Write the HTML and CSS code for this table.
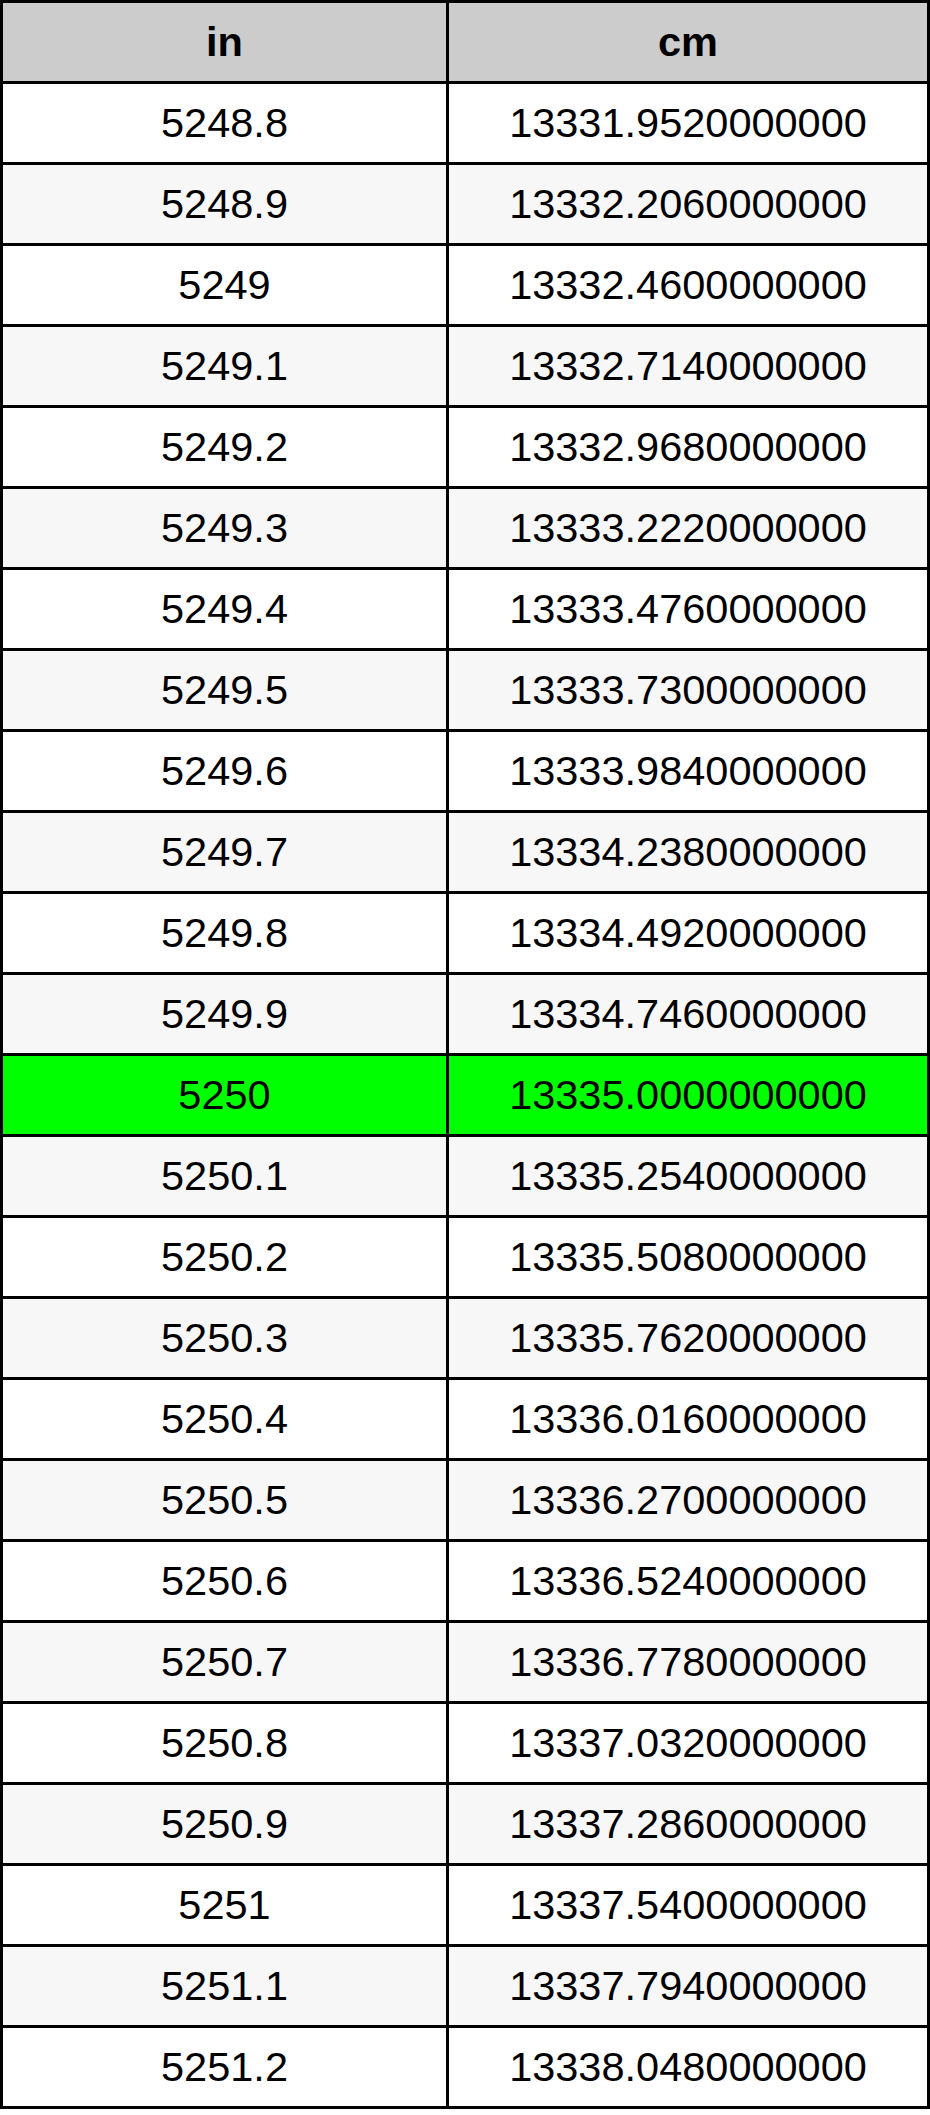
FILE: index.html
```html
<!DOCTYPE html>
<html lang="en">
<head>
<meta charset="utf-8">
<title>in to cm</title>
<link rel="stylesheet" href="styles.css">
</head>
<body>
<div class="conv" role="table">
  <div class="row head" role="row"><div class="cell" role="columnheader">in</div><div class="cell" role="columnheader">cm</div></div>
  <div class="row" role="row"><div class="cell">5248.8</div><div class="cell">13331.9520000000</div></div>
  <div class="row alt" role="row"><div class="cell">5248.9</div><div class="cell">13332.2060000000</div></div>
  <div class="row" role="row"><div class="cell">5249</div><div class="cell">13332.4600000000</div></div>
  <div class="row alt" role="row"><div class="cell">5249.1</div><div class="cell">13332.7140000000</div></div>
  <div class="row" role="row"><div class="cell">5249.2</div><div class="cell">13332.9680000000</div></div>
  <div class="row alt" role="row"><div class="cell">5249.3</div><div class="cell">13333.2220000000</div></div>
  <div class="row" role="row"><div class="cell">5249.4</div><div class="cell">13333.4760000000</div></div>
  <div class="row alt" role="row"><div class="cell">5249.5</div><div class="cell">13333.7300000000</div></div>
  <div class="row" role="row"><div class="cell">5249.6</div><div class="cell">13333.9840000000</div></div>
  <div class="row alt" role="row"><div class="cell">5249.7</div><div class="cell">13334.2380000000</div></div>
  <div class="row" role="row"><div class="cell">5249.8</div><div class="cell">13334.4920000000</div></div>
  <div class="row alt" role="row"><div class="cell">5249.9</div><div class="cell">13334.7460000000</div></div>
  <div class="row hl" role="row"><div class="cell">5250</div><div class="cell">13335.0000000000</div></div>
  <div class="row alt" role="row"><div class="cell">5250.1</div><div class="cell">13335.2540000000</div></div>
  <div class="row" role="row"><div class="cell">5250.2</div><div class="cell">13335.5080000000</div></div>
  <div class="row alt" role="row"><div class="cell">5250.3</div><div class="cell">13335.7620000000</div></div>
  <div class="row" role="row"><div class="cell">5250.4</div><div class="cell">13336.0160000000</div></div>
  <div class="row alt" role="row"><div class="cell">5250.5</div><div class="cell">13336.2700000000</div></div>
  <div class="row" role="row"><div class="cell">5250.6</div><div class="cell">13336.5240000000</div></div>
  <div class="row alt" role="row"><div class="cell">5250.7</div><div class="cell">13336.7780000000</div></div>
  <div class="row" role="row"><div class="cell">5250.8</div><div class="cell">13337.0320000000</div></div>
  <div class="row alt" role="row"><div class="cell">5250.9</div><div class="cell">13337.2860000000</div></div>
  <div class="row" role="row"><div class="cell">5251</div><div class="cell">13337.5400000000</div></div>
  <div class="row alt" role="row"><div class="cell">5251.1</div><div class="cell">13337.7940000000</div></div>
  <div class="row" role="row"><div class="cell">5251.2</div><div class="cell">13338.0480000000</div></div>
</div>
</body>
</html>
```
FILE: styles.css
```css
html, body {
  margin: 0;
  padding: 0;
  background: #ffffff;
}

.conv {
  width: 930px;
  box-sizing: border-box;
  border-top: 3px solid #000;
  border-left: 3px solid #000;
  font-family: "Liberation Sans", Arial, sans-serif;
  font-size: 41.5px;
  color: #000;
}

.row {
  display: grid;
  grid-template-columns: 446px 481px;
  background: #ffffff;
}

.row.alt {
  background: #f7f7f7;
}

.row.hl {
  background: #00ff00;
}

.row.head {
  background: #cccccc;
  font-weight: bold;
}

.cell {
  box-sizing: border-box;
  height: 81px;
  border-right: 3px solid #000;
  border-bottom: 3px solid #000;
  display: flex;
  align-items: center;
  justify-content: center;
  line-height: 1;
}
```
